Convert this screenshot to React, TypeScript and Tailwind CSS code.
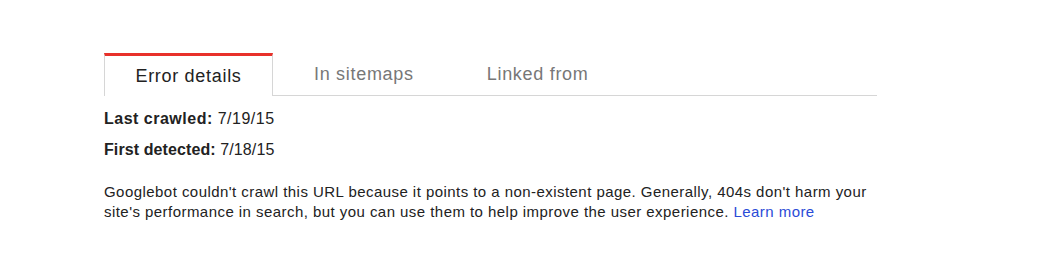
export default function App() {
  return (
    <div className="h-[260px] w-[1038px] bg-white font-['Liberation_Sans',Arial,sans-serif] text-[#222]">
      <div className="ml-[104px] w-[773px] pt-[53px]">
        <div className="flex h-[43px] border-b border-[#d6d6d6]">
          <div className="-mb-px flex w-[169px] items-center justify-center border-x border-t-[3px] border-x-[#d6d6d6] border-t-[#e8312a] bg-white text-[18px] tracking-[0.7px] text-[#222]">
            Error details
          </div>
          <div className="flex items-center pl-[41px] text-[18px] tracking-[0.7px] text-[#777]">In sitemaps</div>
          <div className="flex items-center pl-[73px] text-[18px] tracking-[0.7px] text-[#777]">Linked from</div>
        </div>
        <div className="pt-[13px] text-[15px] leading-[20px] tracking-[0.45px]">
          <p className="text-[16px] tracking-[0.5px]">
            <span className="font-bold">Last crawled:</span> 7/19/15
          </p>
          <p className="mt-[11px] text-[16px] tracking-[0.1px]">
            <span className="font-bold">First detected:</span> 7/18/15
          </p>
          <p className="mt-[22px]">
            Googlebot couldn't crawl this URL because it points to a non-existent page. Generally, 404s don't harm your
            site's performance in search, but you can use them to help improve the user experience.{" "}
            <a href="#" className="text-[#2a4bd7]">
              Learn more
            </a>
          </p>
        </div>
      </div>
    </div>
  );
}
